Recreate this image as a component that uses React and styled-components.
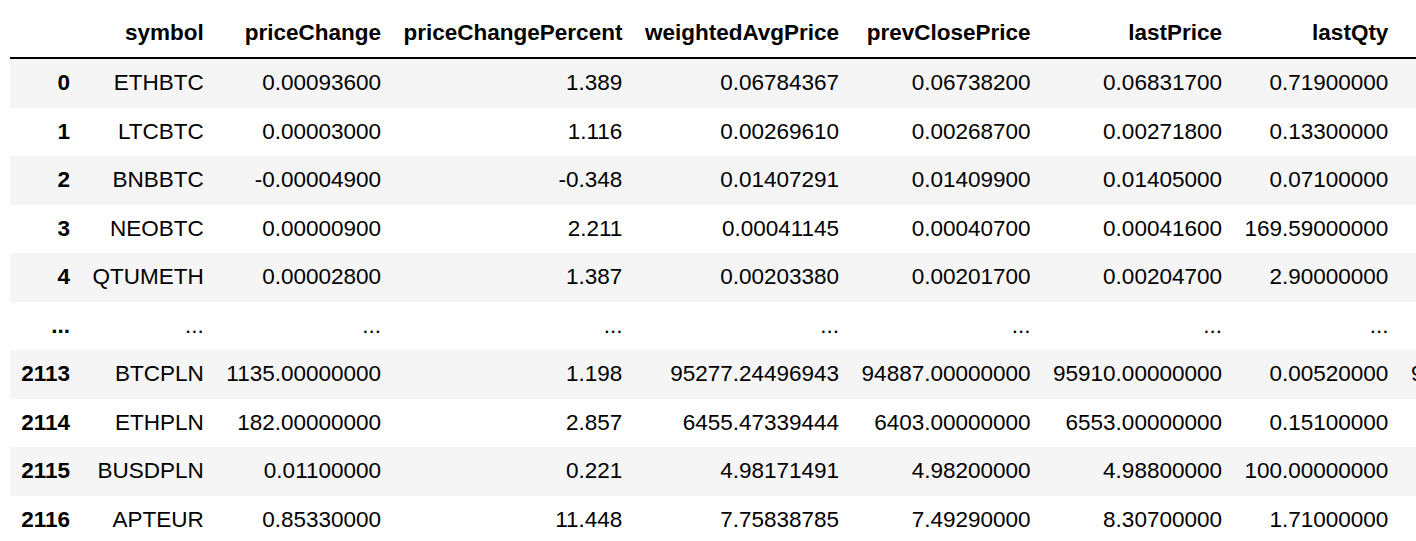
import React from 'react'
import styled, { createGlobalStyle } from 'styled-components'

const GlobalStyle = createGlobalStyle`
    html, body {
        margin: 0;
        padding: 0;
        background: #fff;
        overflow: hidden;
    }
`

const Frame = styled.div`
    width: 100vw;
    height: 100vh;
    overflow: hidden;
    padding: 8.5px 0 0 10px;
    box-sizing: border-box;
`

const Table = styled.table`
    border: none;
    border-collapse: collapse;
    border-spacing: 0;
    color: #000;
    font-family: "Liberation Sans", Arial, sans-serif;
    font-size: 22.5px;
    white-space: nowrap;
`

const Head = styled.thead`
    border-bottom: 2px solid #000;
`

const HeadCell = styled.th`
    text-align: right;
    vertical-align: bottom;
    font-weight: bold;
    padding: 11.25px;
    line-height: 26px;
`

const Body = styled.tbody`
    tr:nth-child(odd) {
        background: #f5f5f5;
    }
`

const IndexCell = styled.th`
    text-align: right;
    vertical-align: middle;
    font-weight: bold;
    padding: 11.25px;
    line-height: 26px;
`

const Cell = styled.td`
    text-align: right;
    vertical-align: middle;
    padding: 11.25px;
    line-height: 26px;
`

const columns = ['symbol', 'priceChange', 'priceChangePercent', 'weightedAvgPrice', 'prevClosePrice', 'lastPrice', 'lastQty', 'bidPrice', 'bidQty']

const rows = [
    ['0', 'ETHBTC', '0.00093600', '1.389', '0.06784367', '0.06738200', '0.06831700', '0.71900000', '0.06831600', '25.19370000'],
    ['1', 'LTCBTC', '0.00003000', '1.116', '0.00269610', '0.00268700', '0.00271800', '0.13300000', '0.00271700', '120.80300000'],
    ['2', 'BNBBTC', '-0.00004900', '-0.348', '0.01407291', '0.01409900', '0.01405000', '0.07100000', '0.01404900', '7.30700000'],
    ['3', 'NEOBTC', '0.00000900', '2.211', '0.00041145', '0.00040700', '0.00041600', '169.59000000', '0.00041500', '288.86000000'],
    ['4', 'QTUMETH', '0.00002800', '1.387', '0.00203380', '0.00201700', '0.00204700', '2.90000000', '0.00204600', '58.40000000'],
    ['...', '...', '...', '...', '...', '...', '...', '...', '...', '...'],
    ['2113', 'BTCPLN', '1135.00000000', '1.198', '95277.24496943', '94887.00000000', '95910.00000000', '0.00520000', '95900.00000000', '0.00306000'],
    ['2114', 'ETHPLN', '182.00000000', '2.857', '6455.47339444', '6403.00000000', '6553.00000000', '0.15100000', '6551.00000000', '0.16450000'],
    ['2115', 'BUSDPLN', '0.01100000', '0.221', '4.98171491', '4.98200000', '4.98800000', '100.00000000', '4.98700000', '3510.00000000'],
    ['2116', 'APTEUR', '0.85330000', '11.448', '7.75838785', '7.49290000', '8.30700000', '1.71000000', '8.30000000', '25.00000000'],
]

const App = () => {
  return (
    <>
        <GlobalStyle />
        <Frame>
            <Table>
                <Head>
                    <tr>
                        <HeadCell></HeadCell>
                        {columns.map((c) => (
                            <HeadCell key={c}>{c}</HeadCell>
                        ))}
                    </tr>
                </Head>
                <Body>
                    {rows.map((r) => (
                        <tr key={r[0] + r[1]}>
                            <IndexCell>{r[0]}</IndexCell>
                            {r.slice(1).map((v, i) => (
                                <Cell key={i}>{v}</Cell>
                            ))}
                        </tr>
                    ))}
                </Body>
            </Table>
        </Frame>
    </>
  )
}

export default App
